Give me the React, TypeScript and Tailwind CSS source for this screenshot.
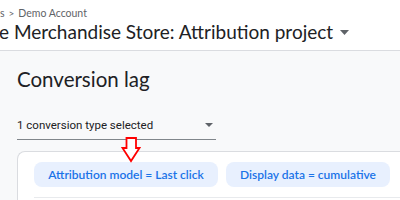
import React from "react";

export default function App() {
  return (
    <div className="w-[400px] h-[200px] overflow-hidden bg-[#f8f9fa] relative" style={{ fontFamily: "Lato, sans-serif" }}>
      <div className="h-[51px] bg-white border-b border-[#dadce0] flex flex-col">
        <div className="h-[8px]" />
        <div className="text-[10.5px] leading-[10px] text-[#5f6368] flex items-center whitespace-nowrap">
          <span>s</span>
          <span className="ml-[4px] text-[10px]">&gt;</span>
          <span className="ml-[4px]">Demo Account</span>
        </div>
        <div className="mt-[2px] flex items-center whitespace-nowrap">
          <span className="text-[19px] leading-[24px] text-[#202124] ml-[-1px]">
            e Merchandise Store: Attribution project
          </span>
          <svg className="ml-[7px]" width="9" height="5" viewBox="0 0 9 5">
            <path d="M0 0 L9 0 L4.5 5 Z" fill="#5f6368" />
          </svg>
        </div>
      </div>
      <div className="pl-[17px]">
        <div className="mt-[16px] text-[20.5px] leading-[24px] text-[#202124]">Conversion lag</div>
        <div className="mt-[24px] w-[199px] h-[25px] border-b border-[#80868b] flex items-start justify-between pt-[2px]">
          <span className="text-[11.5px] leading-[16px] text-[#202124]" style={{ fontFamily: "Roboto, sans-serif" }}>
            1 conversion type selected
          </span>
          <svg className="mt-[6px] mr-[3px]" width="8" height="4" viewBox="0 0 8 4">
            <path d="M0 0 L8 0 L4 4 Z" fill="#5f6368" />
          </svg>
        </div>
        <div className="mt-[11px] h-[60px] bg-white border border-[#dadce0] rounded-tl-[8px] border-r-0 pl-[16px] pt-[10px]">
          <div className="flex gap-[8px] whitespace-nowrap">
            <div className="h-[25px] w-[184px] rounded-[8px] bg-[#e8f0fe] text-[#1a73e8] text-[12px] font-semibold flex items-center justify-center">
              Attribution model = Last click
            </div>
            <div className="h-[25px] w-[164px] rounded-[8px] bg-[#e8f0fe] text-[#1a73e8] text-[12px] font-semibold flex items-center justify-center">
              Display data = cumulative
            </div>
          </div>
          <div className="mt-[10px] border-t border-[#e8eaed]" />
        </div>
      </div>
      <svg className="absolute left-[121px] top-[137px]" width="20" height="26" viewBox="0 0 20 26">
        <path d="M5.5 1 H15 V11 H18.5 L10 24 L1.5 11 H5.5 Z" fill="white" stroke="#ff0000" strokeWidth="1.8" strokeLinejoin="miter" />
      </svg>
    </div>
  );
}
